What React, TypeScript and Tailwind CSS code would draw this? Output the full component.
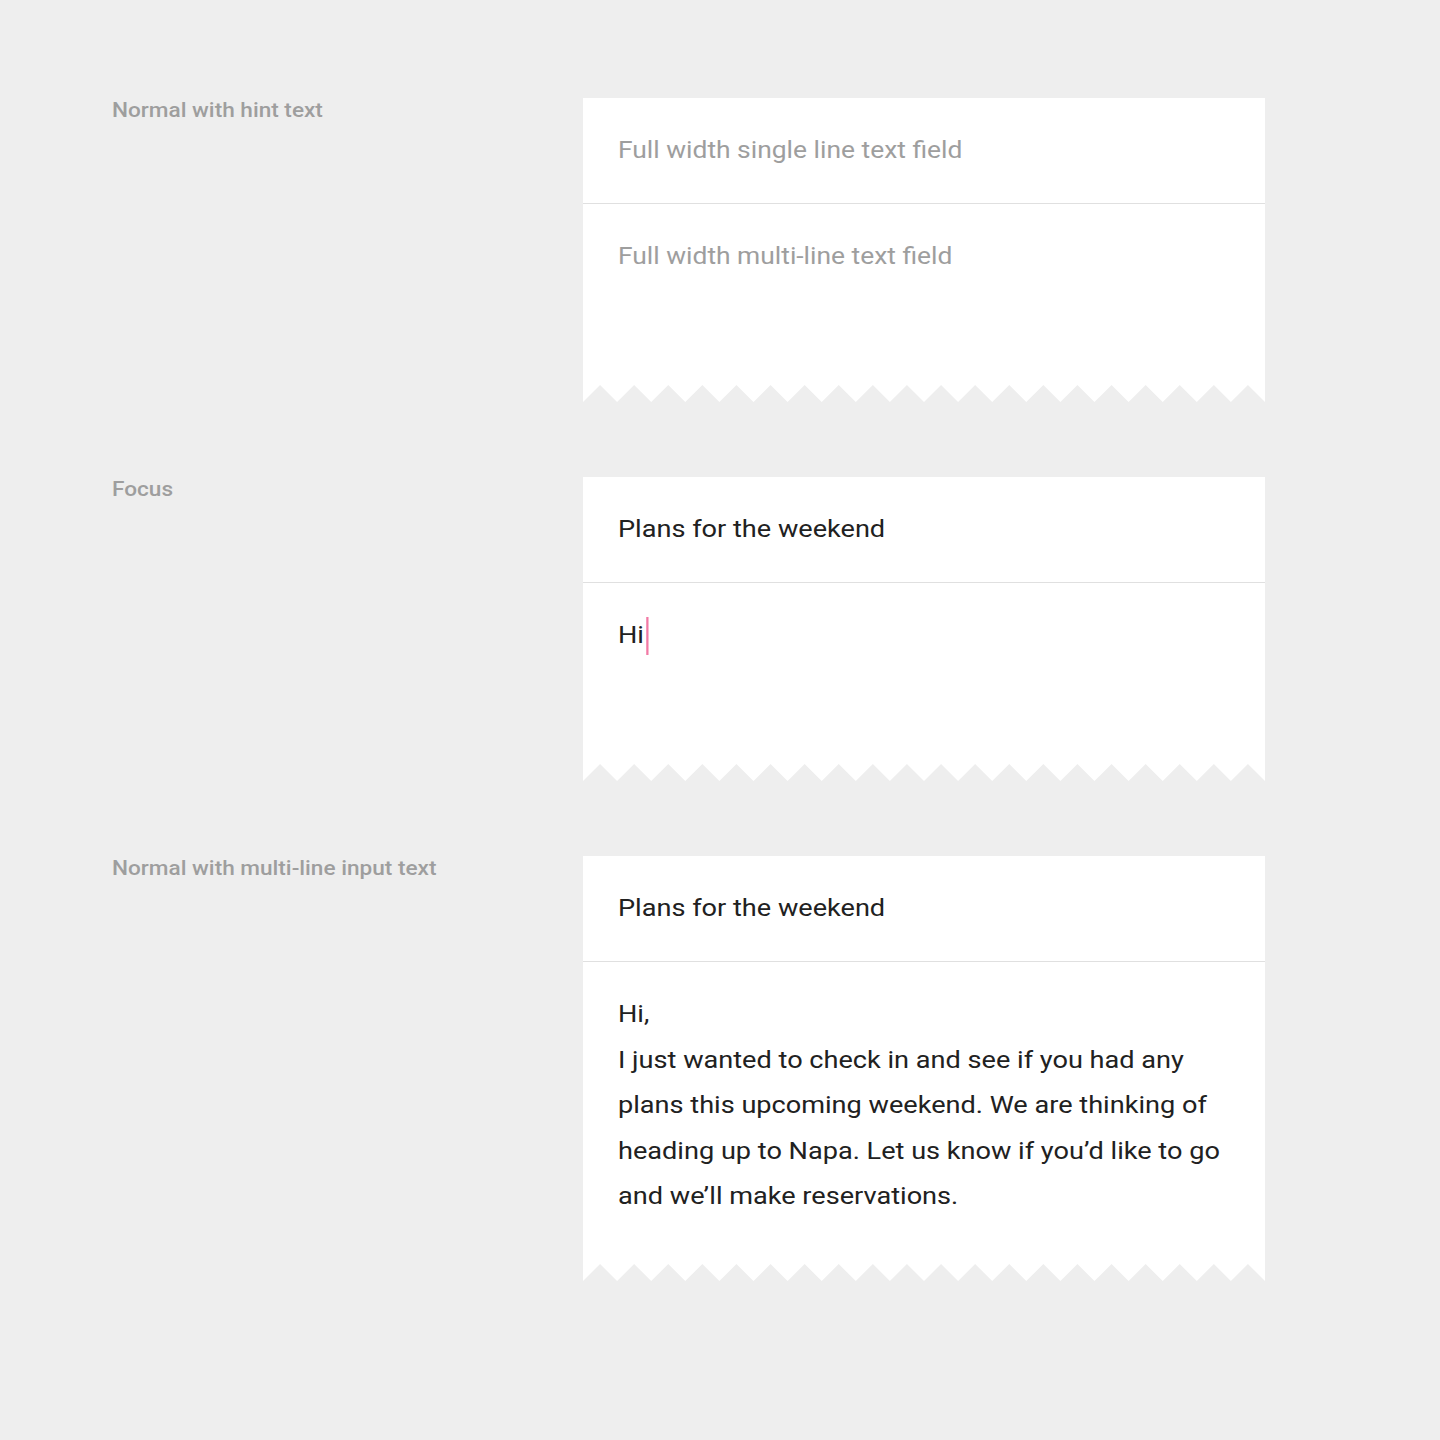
import React from 'react';

// Bottom edge of a full-width multi-line field: white teeth pointing down
function ZigZag() {
  const teeth = 20;
  const w = 34;
  const pts: string[] = ['0,0', `${teeth * w},0`, `${teeth * w},17`];
  for (let k = teeth; k > 0; k--) {
    pts.push(`${k * w - 17},0`);
    pts.push(`${(k - 1) * w},17`);
  }
  return (
    <svg
      className="block w-full h-[17px]"
      viewBox={`0 0 ${teeth * w} 17`}
      preserveAspectRatio="none"
    >
      <polygon points={pts.join(' ')} fill="#ffffff" />
    </svg>
  );
}

// The spec sheet is drawn slightly wide, so text is stretched horizontally
function Wide({ children, hint = false }: { children: React.ReactNode; hint?: boolean }) {
  return (
    <span className={`inline-block origin-left ${hint ? 'scale-x-[1.1]' : 'scale-x-[1.13]'}`}>
      {children}
    </span>
  );
}

interface FieldCardProps {
  subject: React.ReactNode;
  body: React.ReactNode;
  hint?: boolean;
  bodyClassName?: string;
}

function FieldCard({ subject, body, hint = false, bodyClassName = '' }: FieldCardProps) {
  const color = hint ? 'text-[#9e9e9e]' : 'text-[#212121]';
  return (
    <div className="w-[682px] shrink-0">
      <div className="bg-white">
        {/* Single line */}
        <div className={`h-[105px] pt-[30px] px-[35px] text-[24px] leading-[45.5px] ${color}`}>
          <Wide hint={hint}>{subject}</Wide>
        </div>
        <div className="h-px bg-[#e0e0e0]" />
        {/* Multi-line */}
        <div className={`pt-[30px] px-[35px] text-[24px] leading-[45.5px] ${color} ${bodyClassName}`}>
          <Wide hint={hint}>{body}</Wide>
        </div>
      </div>
      <ZigZag />
    </div>
  );
}

function Row({ label, children }: { label: string; children: React.ReactNode }) {
  return (
    <div className="flex">
      <div className="w-[471px] shrink-0 text-[20px] leading-[24px] font-medium text-[#9e9e9e]">
        <span className="inline-block origin-left scale-x-[1.13]">{label}</span>
      </div>
      {children}
    </div>
  );
}

export default function App() {
  return (
    <div
      className="min-h-[1440px] bg-[#eeeeee] pt-[98px] pl-[112px]"
      style={{ fontFamily: 'Roboto, "Noto Sans", sans-serif' }}
    >
      <div className="flex flex-col gap-[75px]">
        <Row label="Normal with hint text">
          <FieldCard
            hint
            subject="Full width single line text field"
            body="Full width multi-line text field"
            bodyClassName="h-[181px]"
          />
        </Row>

        <Row label="Focus">
          <FieldCard
            subject="Plans for the weekend"
            body={
              <span className="inline-flex items-center">
                Hi
                <span className="ml-[2px] inline-block w-[2px] h-[38px] bg-[#f27aa5]" />
              </span>
            }
            bodyClassName="h-[181px]"
          />
        </Row>

        <Row label="Normal with multi-line input text">
          <FieldCard
            subject="Plans for the weekend"
            body={
              <>
                Hi,
                <br />
                I just wanted to check in and see if you had any
                <br />
                plans this upcoming weekend. We are thinking of
                <br />
                heading up to Napa. Let us know if you’d like to go
                <br />
                and we’ll make reservations.
              </>
            }
            bodyClassName="h-[302px]"
          />
        </Row>
      </div>
    </div>
  );
}
